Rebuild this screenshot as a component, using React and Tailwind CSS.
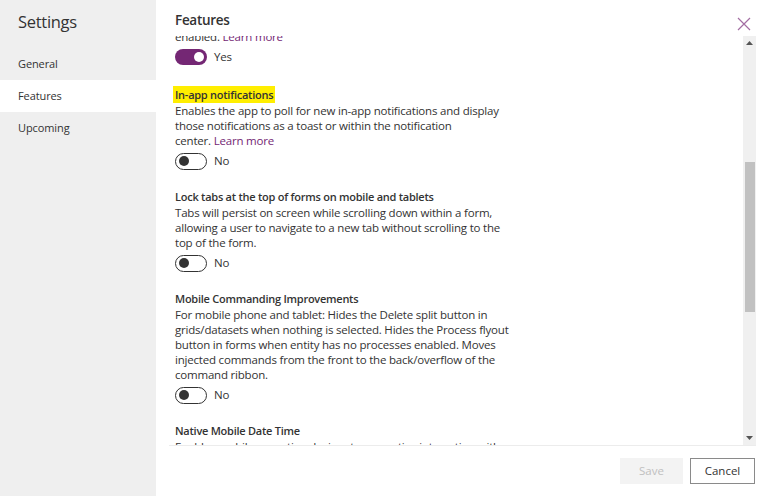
import React from 'react';

const purple = 'text-[#742774]';

function Toggle({ on }) {
  return (
    <div className="flex items-center gap-[7px] mt-[5px] h-[16px]">
      {on ? (
        <span className="flex items-center justify-end w-[32px] h-[16px] rounded-full bg-[#742774] px-[3px]">
          <span className="w-[10px] h-[10px] rounded-full bg-white" />
        </span>
      ) : (
        <span className="flex items-center w-[32px] h-[17px] rounded-full border border-[#333] px-[3px]">
          <span className="w-[10px] h-[10px] rounded-full bg-[#333]" />
        </span>
      )}
      <span className="text-[11.5px] leading-[16px] tracking-[-0.2px] text-[#333]">{on ? 'Yes' : 'No'}</span>
    </div>
  );
}

function Feature({ title, lines, on, highlight }) {
  return (
    <div className="mb-[20px]">
      <div className="h-[16px] leading-[16px] text-[11px] tracking-[-0.25px] font-semibold text-[#333]">
        <span className={highlight ? 'bg-[#ffee00] px-[2px] -mx-[2px] py-[1px]' : ''}>{title}</span>
      </div>
      <div>
        {lines.map((l, i) => (
          <div key={i} className="leading-[15px] text-[11.5px] tracking-[-0.2px] whitespace-nowrap text-[#333]">{l}</div>
        ))}
      </div>
      <Toggle on={on} />
    </div>
  );
}

export default function App() {
  return (
    <div className="flex w-[768px] h-[496px] bg-white text-[#333]" style={{ fontFamily: '"Open Sans", "Noto Sans", sans-serif' }}>
      {/* sidebar */}
      <aside className="w-[156px] bg-[#efefef] flex flex-col">
        <div className="pl-[18px] pt-[9px] h-[48px] text-[16.5px] tracking-[-0.3px] leading-[26px] text-[#333]">Settings</div>
        {['General', 'Features', 'Upcoming'].map((n) => (
          <div
            key={n}
            className={`h-[32px] pl-[18px] flex items-center text-[11px] tracking-[-0.1px] ${n === 'Features' ? 'bg-white' : ''}`}
          >
            {n}
          </div>
        ))}
      </aside>

      {/* main */}
      <main className="flex-1 flex flex-col">
        <div className="h-[36px] flex items-start justify-between pl-[19px] pr-[17px] pt-[10px]">
          <span className="text-[13.5px] tracking-[-0.3px] leading-[20px] font-semibold text-[#333]">Features</span>
          <svg width="14" height="14" viewBox="0 0 14 14" className="mt-[7px]">
            <path d="M1 1 L13 13 M13 1 L1 13" stroke="#a36ea3" strokeWidth="1.2" />
          </svg>
        </div>

        <div className="flex h-[410px] ml-[13px] mr-[12px] border-b border-[#ececec]">
          <div className="flex-1 overflow-hidden pl-[6px]">
            <div className="-mt-[7px]">
              <div className="mb-[22px]">
                <div className="leading-[15px] text-[11.5px] tracking-[-0.2px]">
                  enabled. <span className={purple}>Learn more</span>
                </div>
                <Toggle on />
              </div>
              <Feature
                highlight
                title="In-app notifications"
                lines={[
                  'Enables the app to poll for new in-app notifications and display',
                  'those notifications as a toast or within the notification',
                  <>center. <span className={purple}>Learn more</span></>,
                ]}
              />
              <Feature
                title="Lock tabs at the top of forms on mobile and tablets"
                lines={[
                  'Tabs will persist on screen while scrolling down within a form,',
                  'allowing a user to navigate to a new tab without scrolling to the',
                  'top of the form.',
                ]}
              />
              <Feature
                title="Mobile Commanding Improvements"
                lines={[
                  'For mobile phone and tablet: Hides the Delete split button in',
                  'grids/datasets when nothing is selected. Hides the Process flyout',
                  'button in forms when entity has no processes enabled. Moves',
                  'injected commands from the front to the back/overflow of the',
                  'command ribbon.',
                ]}
              />
              <Feature
                title="Native Mobile Date Time"
                lines={['Enables mobile operating devices to use native interaction with']}
              />
            </div>
          </div>

          {/* scrollbar */}
          <div className="w-[13px] bg-[#f0f0f0] flex flex-col items-center">
            <div className="h-[14px] flex items-center justify-center">
              <svg width="7" height="4" viewBox="0 0 7 4"><path d="M0 4 L3.5 0 L7 4 Z" fill="#555" /></svg>
            </div>
            <div className="h-[112px]" />
            <div className="w-[10px] h-[150px] bg-[#c1c1c1]" />
            <div className="flex-1" />
            <div className="h-[14px] flex items-center justify-center">
              <svg width="7" height="4" viewBox="0 0 7 4"><path d="M0 0 L3.5 4 L7 0 Z" fill="#555" /></svg>
            </div>
          </div>
        </div>

        <div className="flex justify-end gap-[7px] pr-[13px] pt-[12px]">
          <button className="w-[63px] h-[26px] bg-[#f3f3f3] text-[#c0c0c0] text-[11.5px]">Save</button>
          <button className="w-[65px] h-[26px] border border-[#8a8a8a] bg-white text-[#333] text-[11.5px]">Cancel</button>
        </div>
      </main>
    </div>
  );
}
